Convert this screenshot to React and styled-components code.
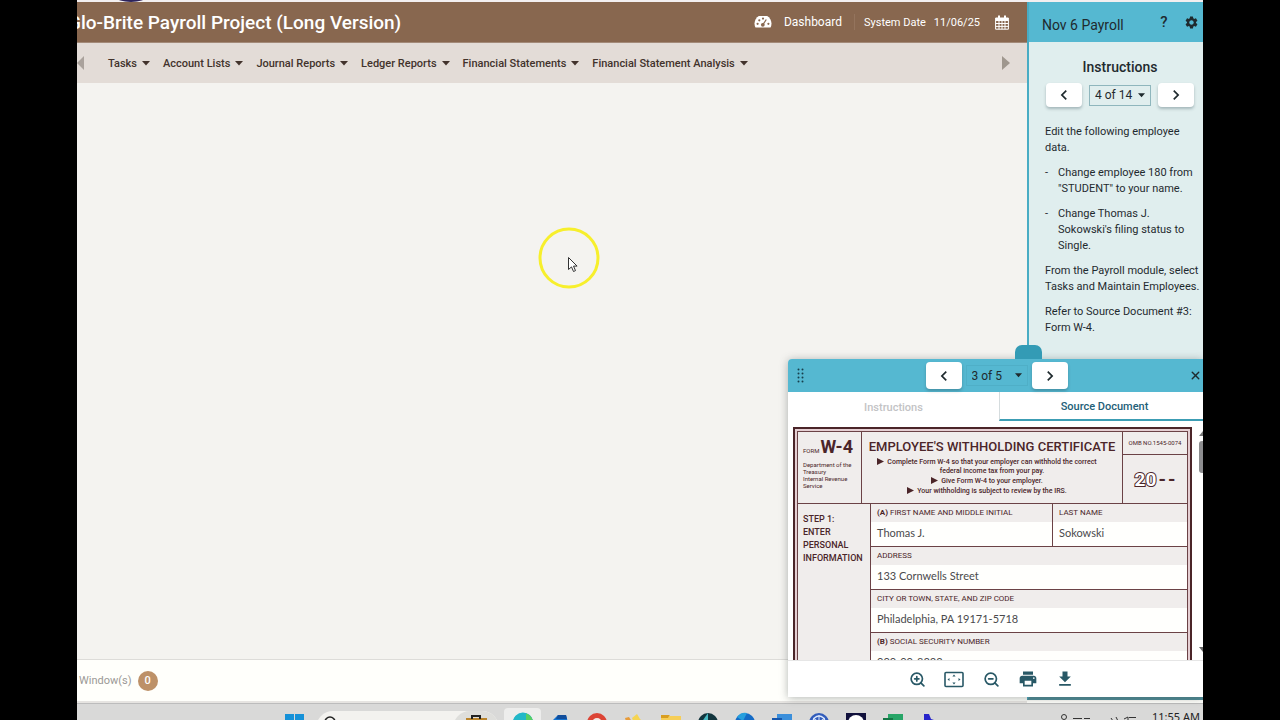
import React from 'react';
import styled, { createGlobalStyle, css } from 'styled-components';
import { MdSettings, MdPrint, MdDownload, MdChevronLeft, MdChevronRight } from 'react-icons/md';
import { ZoomIn, ZoomOut, X } from 'lucide-react';

const GlobalStyle = createGlobalStyle`
  * {
    box-sizing: border-box;
  }

  body {
    margin: 0;
    background: #000;
    font-family: Roboto, 'Liberation Sans', sans-serif;
    color: #1f2a2e;
  }

  button,
  select {
    font-family: inherit;
    color: inherit;
  }

  p, h1, h2, ul, dl, dd {
    margin: 0;
    padding: 0;
  }
`;

const color = {
  brown: '#88674f',
  teal: '#55b8d1',
  ink: '#4b2529',
  rule: '#6b4246',
  paper: '#f0edec',
};

// Screen
const Screen = styled.div`
  position: relative;
  display: flex;
  flex-direction: column;
  height: 100vh;
  margin: 0 77px;
  overflow: hidden;
  background: #fffffb;
`;

const TopStrip = styled.div`
  display: flex;
  height: 2px;
  padding-left: 38px;
  background: #f3eff0;
  overflow: hidden;
`;

const Main = styled.div`
  display: flex;
  flex: 1;
  min-height: 0;
`;

const Workspace = styled.div`
  display: flex;
  flex-direction: column;
  flex: 1;
  min-width: 0;
`;

const Header = styled.header`
  display: flex;
  align-items: center;
  height: 41px;
  padding-right: 18px;
  background: ${color.brown};
  border-bottom: 1px solid #a38a79;
  color: #fff;
  overflow: hidden;
`;

const Title = styled.h1`
  flex: 1;
  margin-left: -9px;
  font-size: 19px;
  font-weight: 500;
  white-space: nowrap;
`;

const DashboardLink = styled.a`
  display: flex;
  align-items: center;
  gap: 12px;
  padding-right: 12px;
  border-right: 1px solid #94745d;
  color: inherit;
  font-size: 12px;
  line-height: 16px;
  text-decoration: none;
`;

const SystemDate = styled.div`
  display: flex;
  align-items: center;
  gap: 8px;
  padding: 0 15px 0 9px;
  font-size: 11px;
`;

const IconButton = styled.button`
  display: flex;
  align-items: center;
  justify-content: center;
  padding: 0;
  border: 0;
  background: none;
`;

const Nav = styled.nav`
  display: flex;
  align-items: center;
  height: 40px;
  padding-right: 17px;
  background: #e3dcd7;
`;

const MenuList = styled.div`
  display: flex;
  flex: 1;
  gap: 13px;
  padding-left: 24px;
`;

const MenuButton = styled.button`
  display: flex;
  align-items: center;
  gap: 5px;
  padding: 0;
  border: 0;
  background: none;
  color: #42332c;
  font-size: 11px;
  font-weight: 500;
  white-space: nowrap;
`;

const Canvas = styled.main`
  flex: 1;
  background: #f4f3f0;
`;

const WindowBar = styled.footer`
  display: flex;
  align-items: center;
  gap: 6px;
  height: 44px;
  padding: 0 2px;
  border-top: 1px solid #dddcd9;
  border-bottom: 2px solid #e6e4e1;
  color: #9b9996;
  font-size: 11px;
`;

const Count = styled.span`
  width: 20px;
  height: 20px;
  border-radius: 50%;
  background: #bd9168;
  color: #fff;
  font-size: 11px;
  font-weight: 500;
  line-height: 20px;
  text-align: center;
`;

// Side panel
const SidePanel = styled.aside`
  display: flex;
  flex-direction: column;
  width: 176px;
  border-left: 2px solid #48acc4;
  border-bottom: 3px solid #4d8b96;
  margin-bottom: 3px;
  background: #e0eeee;
`;

const SideHeader = styled.div`
  display: flex;
  align-items: center;
  height: 40px;
  padding: 0 4px 0 13px;
  background: ${color.teal};
`;

const SideTitle = styled.h2`
  flex: 1;
  padding-top: 6px;
  font-size: 14px;
  font-weight: 400;
`;

const HelpButton = styled(IconButton)`
  width: 20px;
  margin-right: 10px;
  font-size: 15px;
  font-weight: 500;
`;

const SideTop = styled.div`
  padding: 17px 0 0 8px;
`;

const SideHeading = styled.h2`
  padding-bottom: 8px;
  font-size: 14px;
  font-weight: 500;
  line-height: 16px;
  text-align: center;
`;

const Pager = styled.div`
  display: flex;
  align-items: center;
  justify-content: center;
  gap: ${({ $gap }) => $gap};
`;

const PageButton = styled.button`
  display: flex;
  align-items: center;
  justify-content: center;
  width: 36px;
  height: ${({ $tall }) => ($tall ? '27px' : '24px')};
  padding: 0;
  border: 0;
  border-radius: 4px;
  background: #fff;
  box-shadow: 0 2px 3px rgba(30, 60, 70, 0.3);
`;

const SelectBox = styled.label`
  display: flex;
  align-items: center;
  position: relative;

  svg {
    position: absolute;
    right: 6px;
    top: 7px;
    pointer-events: none;
  }
`;

const PageSelect = styled.select`
  appearance: none;
  width: 62px;
  height: 21px;
  padding: 0 5px;
  border: 1px solid ${({ $line }) => $line};
  border-radius: 0;
  background: transparent;
  font-size: 12px;
`;

const Steps = styled.div`
  display: flex;
  flex-direction: column;
  gap: 9px;
  padding: 17px 0 0 16px;
  font-size: 11px;
  line-height: 16px;
  white-space: nowrap;
`;

const StepList = styled.ul`
  display: flex;
  flex-direction: column;
  gap: 9px;
  list-style: none;
`;

const StepItem = styled.li`
  display: flex;

  &::before {
    content: '-';
    flex: none;
    width: 13px;
  }
`;

// Floating document window
const DocWindow = styled.section`
  position: absolute;
  right: 0;
  bottom: 23px;
  display: flex;
  flex-direction: column;
  width: 415px;
  height: 338px;
  border-radius: 4px 0 0 0;
  background: #fff;
  box-shadow: 0 1px 8px rgba(60, 70, 70, 0.4);
`;

const Handle = styled.div`
  position: absolute;
  top: -14px;
  left: 227px;
  width: 27px;
  height: 14px;
  border-radius: 7px 7px 0 0;
  background: #339bb5;
`;

const DocBar = styled.div`
  display: flex;
  align-items: center;
  justify-content: space-between;
  height: 33px;
  padding: 0 1px 0 9px;
  border-radius: 4px 0 0 0;
  background: ${color.teal};
`;

const Tabs = styled.div`
  display: flex;
  height: 29px;
`;

const Tab = styled.button`
  padding: 2px 0 0;
  border: 0;
  background: none;
  font-size: 11px;
  font-weight: 500;

  ${({ $active }) =>
    $active
      ? css`
          flex: 1;
          padding-left: 6px;
          border-left: 1px solid #d5dcde;
          border-bottom: 2px solid #3c9db4;
          color: #246078;
        `
      : css`
          width: 211px;
          color: #c3c3c5;
        `}
`;

const DocBody = styled.div`
  display: flex;
  flex: 1;
  min-height: 0;
  padding: 6px 0 0 5px;
  overflow: hidden;
`;

const Sheet = styled.div`
  flex: 1;
  height: 280px;
  padding: 2px;
  border: 2px solid ${color.ink};
  background: #e5cfd3;
  color: ${color.ink};
`;

const SheetInner = styled.div`
  display: flex;
  flex-direction: column;
  height: 100%;
  border: 1px solid ${color.rule};
  background: ${color.paper};
`;

const SheetHead = styled.div`
  display: flex;
  height: 72px;
  border-bottom: 1px solid ${color.rule};
`;

const FormId = styled.div`
  width: 64px;
  padding: 5px 0 0 5px;
  border-right: 1px solid ${color.rule};
  white-space: nowrap;
`;

const FormName = styled.div`
  display: flex;
  align-items: baseline;
  gap: 1px;
  font-size: 6px;
  line-height: 20px;

  strong {
    font-size: 18px;
    font-weight: 700;
  }
`;

const Department = styled.p`
  font-size: 6px;
  line-height: 7px;
`;

const Certificate = styled.div`
  flex: 1;
  padding-top: 7px;
  font-size: 7px;
  font-weight: 500;
  line-height: 9px;
  text-align: center;
  white-space: nowrap;
`;

const CertTitle = styled.h2`
  padding-bottom: 3px;
  font-size: 13px;
  font-weight: 500;
  line-height: 16px;
`;

const CertLine = styled.p`
  display: flex;
  align-items: flex-start;
  justify-content: center;
  gap: 3px;
  padding: 0 11px 1px 0;
`;

const YearColumn = styled.div`
  display: flex;
  flex-direction: column;
  width: 65px;
  border-left: 1px solid ${color.rule};
  text-align: center;
`;

const Omb = styled.div`
  height: 23px;
  border-bottom: 1px solid ${color.rule};
  font-size: 6px;
  line-height: 22px;
`;

const Year = styled.div`
  display: flex;
  align-items: center;
  justify-content: center;
  gap: 2px;
  flex: 1;
  font-size: 19px;
  font-weight: 700;
`;

const Century = styled.span`
  color: #fff;
  -webkit-text-stroke: 2px ${color.ink};
  paint-order: stroke fill;
`;

const SheetRows = styled.div`
  display: flex;
  flex: 1;
`;

const StepName = styled.div`
  width: 73px;
  padding: 9px 0 0 5px;
  border-right: 1px solid ${color.rule};
  font-size: 9px;
  font-weight: 500;
  line-height: 13px;
`;

const Fields = styled.dl`
  flex: 1;
`;

const FieldRow = styled.div`
  display: flex;
  height: 43px;
  border-bottom: 1px solid ${color.rule};
`;

const Field = styled.div`
  flex: ${({ $last }) => ($last ? '0 0 135px' : '1')};
  border-left: ${({ $last }) => ($last ? `1px solid ${color.rule}` : '0')};
  background: #fffffd;
`;

const FieldLabel = styled.dt`
  height: 18px;
  padding-left: 6px;
  background: ${color.paper};
  font-size: 8px;
  line-height: 18px;
`;

const FieldValue = styled.dd`
  padding-left: 6px;
  color: #4a4a4c;
  font-family: Lato, sans-serif;
  font-size: 11px;
  font-weight: 400;
  line-height: 22px;
`;

const ScrollTrack = styled.div`
  display: flex;
  flex-direction: column;
  align-items: flex-end;
  justify-content: space-between;
  width: 11px;
  padding: 4px 0 8px;
  overflow: hidden;
`;

const ScrollThumb = styled.div`
  width: 4px;
  height: 32px;
  margin: 5px 0 auto;
  border-radius: 3px 0 0 3px;
  background: #8d8d8f;
`;

const DocTools = styled.div`
  display: flex;
  align-items: center;
  gap: 15px;
  height: 37px;
  padding-left: 118px;
  border-top: 1px solid #e6e6e6;
  color: #285866;
`;

const ToolButton = styled(IconButton)`
  width: 22px;
  height: 22px;
  color: inherit;
`;

// Taskbar
const Taskbar = styled.div`
  display: flex;
  align-items: flex-start;
  height: 17px;
  padding: 0 3px 0 199px;
  border-top: 1px solid #bcbcbc;
  background: #d9d9d8;
  overflow: hidden;
`;

const SearchPill = styled.div`
  width: 183px;
  height: 34px;
  flex: none;
  margin: 7px 5px 0 3px;
  border-radius: 17px;
  background: #f3f2ef;
  overflow: hidden;
`;

const TaskIcon = styled.div`
  display: flex;
  justify-content: center;
  flex: none;
  width: 37px;
  height: 40px;
  margin-top: 4px;
  border-radius: 4px;
  background: ${({ $active }) => ($active ? '#ededec' : 'transparent')};
`;

const Tray = styled.div`
  display: flex;
  gap: 16px;
  margin-left: auto;
  padding-top: 5px;
  color: #222;
  font-family: 'Noto Sans', sans-serif;
  font-size: 11px;
  line-height: 16px;
  white-space: nowrap;
`;

const CursorRing = styled.svg`
  position: absolute;
  top: 226px;
  left: 461px;
  pointer-events: none;
`;

const Caret = ({ size = 8 }) => (
  <svg width={size} height="6" viewBox="0 0 8 6" aria-hidden="true">
    <path d="M0 1h8L4 5.5z" fill="currentColor" />
  </svg>
);

const GaugeIcon = () => (
  <svg width="18" height="12" viewBox="0 0 18 12" aria-hidden="true">
    <path d="M1.500 11.500A8.500 8.500 0 1 1 16.500 11.500z" fill="#fff" />
    <g fill={color.brown}>
      <circle cx="3.600" cy="7.800" r="1.100" />
      <circle cx="5.300" cy="4.300" r="1.100" />
      <circle cx="9" cy="2.600" r="1.100" />
      <circle cx="14.400" cy="7.800" r="1.100" />
      <circle cx="8.800" cy="8.800" r="1.900" />
    </g>
    <path d="M9 8.500l3.300-5" stroke={color.brown} strokeWidth="1.300" />
  </svg>
);

const CalendarIcon = () => (
  <svg width="14" height="15" viewBox="0 0 14 15" fill="none" stroke="#fff" aria-hidden="true">
    <path d="M.6 3h12.8v11.2H.6zM.6 5.5h12.8M.6 8.5h12.8M.6 11.4h12.8M4 5.5v8.7M7 5.5v8.7M10 5.5v8.7" />
    <path d="M1 4h12" strokeWidth="2" />
    <path d="M4 .5v3M10 .5v3" strokeWidth="2" />
  </svg>
);

const FitIcon = () => (
  <svg width="20" height="17" viewBox="0 0 20 17" fill="none" aria-hidden="true">
    <rect x="1" y="1.5" width="18" height="14" rx="1" stroke="currentColor" strokeWidth="1.6" />
    <path d="M10 3.5l1.6 2H8.4zM10 13.5l1.6-2H8.4zM3.5 8.5l2-1.6v3.2zM16.5 8.5l-2-1.6v3.2z" fill="currentColor" />
  </svg>
);

const DragDots = () => (
  <svg width="7" height="15" viewBox="0 0 7 15" fill="#173f4c" aria-hidden="true">
    {[2, 6, 10, 14].map((y) => (
      <g key={y}>
        <circle cx="1.5" cy={y - 0.5} r="1" />
        <circle cx="5.5" cy={y - 0.5} r="1" />
      </g>
    ))}
  </svg>
);

const Marker = () => (
  <svg width="8" height="7" viewBox="0 0 8 7" aria-hidden="true">
    <path d="M1 0l7 3.5L1 7z" fill={color.ink} />
  </svg>
);

const menus = [
  'Tasks',
  'Account Lists',
  'Journal Reports',
  'Ledger Reports',
  'Financial Statements',
  'Financial Statement Analysis',
];

const taskIcons = [
  <g key="edge">
    <circle cx="12" cy="15" r="10" fill="#168fca" />
    <path d="M2 15a10 10 0 0 1 20-1l-9 1z" fill="#22b8c8" />
    <path d="M15 5.5a10 10 0 0 1 7 9h-7z" fill="#58cf62" />
  </g>,
  <g key="outlook">
    <path d="M5 12l5-5h8l4 15H3z" fill="#1473cf" />
    <path d="M10 7h8l1 4H8z" fill="#124e9b" />
  </g>,
  <g key="chrome">
    <circle cx="12" cy="15" r="10" fill="#dc4435" />
    <circle cx="12" cy="15" r="5" fill="#f4e9e5" />
  </g>,
  <g key="paint">
    <path d="M3 10l4-1 5 8H5z" fill="#e79b39" />
    <path d="M10 10l5-4 3 5 3 3-8 4z" fill="#f5d451" />
  </g>,
  <g key="folder">
    <path d="M2 7h8l2 2h10v14H2z" fill="#d99e20" />
    <path d="M10 8h12v15H2V10h7z" fill="#f6ce57" />
  </g>,
  <g key="quick">
    <circle cx="12" cy="15" r="10" fill="#12353d" />
    <path d="M12 5v18L5 15z" fill="#49bac3" />
  </g>,
  <g key="globe">
    <circle cx="12" cy="15" r="10" fill="#146bc6" />
    <path d="M4 9a10 10 0 0 1 10-4l-4 8z" fill="#269fdd" />
  </g>,
  <g key="word">
    <path d="M7 6h15v16H7z" fill="#3b8fdb" />
    <path d="M2 10h10v12H2z" fill="#1757ac" />
  </g>,
  <g key="helm" fill="none" stroke="#dce7fa">
    <circle cx="12" cy="15" r="10" fill="#315cbb" stroke="none" />
    <circle cx="12" cy="14" r="6" strokeWidth="1.4" />
    <path d="M12 7v14M6 10l12 8M18 10L6 18" />
  </g>,
  <g key="disc">
    <path d="M2 5h20v20H2z" fill="#11113c" />
    <circle cx="12" cy="15" r="8" fill="#fff" />
  </g>,
  <g key="excel">
    <path d="M7 6h15v16H7z" fill="#27a567" />
    <path d="M2 10h10v12H2z" fill="#157545" />
  </g>,
  <g key="bird">
    <path d="M6 6h5l2 5 6 2-2 8H6z" fill="#2724ca" />
  </g>,
];

const PageSwitch = ({ label, value, pages, line, gap, tall }) => (
  <Pager $gap={gap}>
    <PageButton $tall={tall} aria-label={`Previous ${label}`}>
      <MdChevronLeft size={20} />
    </PageButton>
    <SelectBox>
      <PageSelect $line={line} aria-label={label} defaultValue={value}>
        {Array.from({ length: pages }, (_, i) => (
          <option key={i} value={i + 1}>
            {i + 1} of {pages}
          </option>
        ))}
      </PageSelect>
      <Caret size={7} />
    </SelectBox>
    <PageButton $tall={tall} aria-label={`Next ${label}`}>
      <MdChevronRight size={20} />
    </PageButton>
  </Pager>
);

const FormField = ({ prefix, label, value, last }) => (
  <Field $last={last}>
    <FieldLabel>
      {prefix && <b>{prefix} </b>}
      {label}
    </FieldLabel>
    <FieldValue>{value}</FieldValue>
  </Field>
);

const WithholdingForm = () => (
  <Sheet>
    <SheetInner>
      <SheetHead>
        <FormId>
          <FormName>
            FORM <strong>W-4</strong>
          </FormName>
          <Department>
            Department of the
            <br />
            Treasury
            <br />
            Internal Revenue
            <br />
            Service
          </Department>
        </FormId>
        <Certificate>
          <CertTitle>EMPLOYEE'S WITHHOLDING CERTIFICATE</CertTitle>
          <CertLine>
            <Marker />
            <span>
              Complete Form W-4 so that your employer can withhold the correct
              <br />
              federal income tax from your pay.
            </span>
          </CertLine>
          <CertLine>
            <Marker />
            Give Form W-4 to your employer.
          </CertLine>
          <CertLine>
            <Marker />
            Your withholding is subject to review by the IRS.
          </CertLine>
        </Certificate>
        <YearColumn>
          <Omb>OMB NO.1545-0074</Omb>
          <Year>
            <Century>20</Century>
            <span>-</span>
            <span>-</span>
          </Year>
        </YearColumn>
      </SheetHead>
      <SheetRows>
        <StepName>
          STEP 1:
          <br />
          ENTER PERSONAL INFORMATION
        </StepName>
        <Fields>
          <FieldRow>
            <FormField prefix="(A)" label="FIRST NAME AND MIDDLE INITIAL" value="Thomas J." />
            <FormField label="LAST NAME" value="Sokowski" last />
          </FieldRow>
          <FieldRow>
            <FormField label="ADDRESS" value="133 Cornwells Street" />
          </FieldRow>
          <FieldRow>
            <FormField label="CITY OR TOWN, STATE, AND ZIP CODE" value="Philadelphia, PA 19171-5718" />
          </FieldRow>
          <FieldRow>
            <FormField prefix="(B)" label="SOCIAL SECURITY NUMBER" value="000-00-8333" />
          </FieldRow>
        </Fields>
      </SheetRows>
    </SheetInner>
  </Sheet>
);

const App = () => {
  return (
    <>
      <GlobalStyle />
      <Screen>
        <TopStrip>
          <svg width="32" height="2" aria-hidden="true">
            <ellipse cx="16" cy="-3" rx="15" ry="5" fill="#2d235b" />
          </svg>
        </TopStrip>
        <Main>
          <Workspace>
            <Header>
              <Title>Glo-Brite Payroll Project (Long Version)</Title>
              <DashboardLink href="#dashboard">
                <GaugeIcon />
                Dashboard
              </DashboardLink>
              <SystemDate>
                <span>System Date</span>
                <span>11/06/25</span>
              </SystemDate>
              <IconButton aria-label="Pick date">
                <CalendarIcon />
              </IconButton>
            </Header>
            <Nav>
              <IconButton aria-label="Scroll menu left">
                <svg width="7" height="14" viewBox="0 0 7 14">
                  <path d="M7 0v14L0 7z" fill="#aaa29c" />
                </svg>
              </IconButton>
              <MenuList>
                {menus.map((menu) => (
                  <MenuButton key={menu}>
                    {menu}
                    <Caret />
                  </MenuButton>
                ))}
              </MenuList>
              <IconButton aria-label="Scroll menu right">
                <svg width="8" height="14" viewBox="0 0 8 14">
                  <path d="M0 0v14l8-7z" fill="#9f978e" />
                </svg>
              </IconButton>
            </Nav>
            <Canvas />
            <WindowBar>
              Window(s) <Count>0</Count>
            </WindowBar>
          </Workspace>
          <SidePanel>
            <SideHeader>
              <SideTitle>Nov 6 Payroll</SideTitle>
              <HelpButton>?</HelpButton>
              <IconButton aria-label="Settings">
                <MdSettings size={15} />
              </IconButton>
            </SideHeader>
            <SideTop>
              <SideHeading>Instructions</SideHeading>
              <PageSwitch label="instruction" value={4} pages={14} line="#8fb6bd" gap="7px" />
            </SideTop>
            <Steps>
              <p>
                Edit the following employee
                <br />
                data.
              </p>
              <StepList>
                <StepItem>
                  <span>
                    Change employee 180 from
                    <br />
                    "STUDENT" to your name.
                  </span>
                </StepItem>
                <StepItem>
                  <span>
                    Change Thomas J.
                    <br />
                    Sokowski's filing status to
                    <br />
                    Single.
                  </span>
                </StepItem>
              </StepList>
              <p>
                From the Payroll module, select
                <br />
                Tasks and Maintain Employees.
              </p>
              <p>
                Refer to Source Document #3:
                <br />
                Form W-4.
              </p>
            </Steps>
          </SidePanel>
        </Main>
        <Taskbar>
          <TaskIcon>
            <svg width="22" height="26" viewBox="0 0 22 26" aria-hidden="true">
              <path d="M1 6h9v9H1zM11 6h9v9h-9z" fill="#1591d8" />
            </svg>
          </TaskIcon>
          <SearchPill>
            <svg width="183" height="34" viewBox="0 0 183 34" aria-hidden="true">
              <rect x="137" width="46" height="34" rx="17" fill="#dededb" />
              <circle cx="14" cy="11" r="5" fill="none" stroke="#222" strokeWidth="1.6" />
              <path d="M150 7h21v12h-21z" fill="#ba842b" />
              <path d="M156 8V5h8v3" fill="none" stroke="#222" strokeWidth="2" />
            </svg>
          </SearchPill>
          {taskIcons.map((icon, i) => (
            <TaskIcon key={icon.key} $active={i === 0}>
              <svg width="24" height="26" viewBox="0 0 24 26" aria-hidden="true">
                {icon}
              </svg>
            </TaskIcon>
          ))}
          <Tray>
            <svg width="76" height="14" viewBox="0 0 76 14" fill="none" stroke="#333" aria-hidden="true">
              <circle cx="4" cy="8" r="2.5" />
              <path d="M13 9.5h9M24 9.5h6M51 9l2 3M56 8l2 4M64 10l4-2v4M69 8.5h7" />
            </svg>
            11:55 AM
          </Tray>
        </Taskbar>

        <DocWindow>
          <Handle />
          <DocBar>
            <DragDots />
            <PageSwitch label="document" value={3} pages={5} line="#4fafc7" gap="4px" tall />
            <IconButton aria-label="Close">
              <X size={13} strokeWidth={2.5} />
            </IconButton>
          </DocBar>
          <Tabs>
            <Tab>Instructions</Tab>
            <Tab $active>Source Document</Tab>
          </Tabs>
          <DocBody>
            <WithholdingForm />
            <ScrollTrack>
              <svg width="4" height="5" aria-hidden="true">
                <path d="M0 5l4-5v5z" fill="#777" />
              </svg>
              <ScrollThumb />
              <svg width="4" height="5" aria-hidden="true">
                <path d="M0 0h4v5z" fill="#666" />
              </svg>
            </ScrollTrack>
          </DocBody>
          <DocTools>
            <ToolButton aria-label="Zoom in">
              <ZoomIn size={17} strokeWidth={2.4} />
            </ToolButton>
            <ToolButton aria-label="Fit to window">
              <FitIcon />
            </ToolButton>
            <ToolButton aria-label="Zoom out">
              <ZoomOut size={17} strokeWidth={2.4} />
            </ToolButton>
            <ToolButton aria-label="Print">
              <MdPrint size={20} />
            </ToolButton>
            <ToolButton aria-label="Download">
              <MdDownload size={20} />
            </ToolButton>
          </DocTools>
        </DocWindow>

        <CursorRing width="64" height="64" viewBox="0 0 64 64" aria-hidden="true">
          <circle cx="31" cy="32" r="29" fill="none" stroke="#f7ef2c" strokeWidth="3" />
          <path d="M30.500 31.500v12l3-2.600 2 4.600 2-.9-2-4.500h3.600z" fill="#fff" stroke="#333" />
        </CursorRing>
      </Screen>
    </>
  );
};

export default App;
